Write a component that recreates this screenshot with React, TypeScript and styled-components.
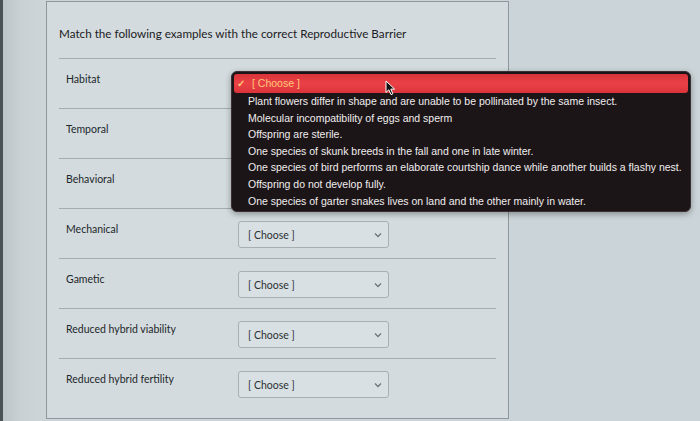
import React from 'react'
import styled, { createGlobalStyle } from 'styled-components'

const barriers = [
  'Habitat',
  'Temporal',
  'Behavioral',
  'Mechanical',
  'Gametic',
  'Reduced hybrid viability',
  'Reduced hybrid fertility',
]

const examples = [
  'Plant flowers differ in shape and are unable to be pollinated by the same insect.',
  'Molecular incompatibility of eggs and sperm',
  'Offspring are sterile.',
  'One species of skunk breeds in the fall and one in late winter.',
  'One species of bird performs an elaborate courtship dance while another builds a flashy nest.',
  'Offspring do not develop fully.',
  'One species of garter snakes lives on land and the other mainly in water.',
]

// rows whose select sits under the open popup menu
const coveredRows = 3

const GlobalStyle = createGlobalStyle`
  html, body {
    margin: 0;
    padding: 0;
    background: #cbd4d8;
  }
  body {
    width: 700px;
    height: 421px;
    overflow: hidden;
  }
`

const Chevron: React.FC = () => (
  <svg width="8" height="6" viewBox="0 0 8 6">
    <path d="M1 1.5 L4 4.5 L7 1.5" fill="none" stroke="#6d767b" strokeWidth="1.3" />
  </svg>
)

const Pointer: React.FC = () => (
  <svg width="11" height="16" viewBox="0 0 11 16">
    <path
      d="M1 1 L1 12.5 L3.8 9.8 L6 14.6 L7.9 13.8 L5.8 9.1 L9.6 9.1 Z"
      fill="#111"
      stroke="#fff"
      strokeWidth="1"
      strokeLinejoin="round"
    />
  </svg>
)

const App: React.FC = () => {
  return (
    <Page>
      <GlobalStyle />
      <Gutter />
      <Card>
        <Title>Match the following examples with the correct Reproductive Barrier</Title>
        <Rows>
          {barriers.map((name, i) => (
            <Row key={name} last={i === barriers.length - 1}>
              <Label>{name}</Label>
              {i < coveredRows ? (
                <Slot />
              ) : (
                <Select>
                  <span>[ Choose ]</span>
                  <Chevron />
                </Select>
              )}
            </Row>
          ))}
        </Rows>
      </Card>
      <Menu>
        <Selected>
          <Check>✓</Check>
          [ Choose ]
          <CursorSpot>
            <Pointer />
          </CursorSpot>
        </Selected>
        {examples.map((text) => (
          <Option key={text}>{text}</Option>
        ))}
      </Menu>
    </Page>
  )
}

const Page = styled.div`
  position: relative;
  display: flex;
  width: 700px;
  height: 421px;
  font-family: Lato, 'Open Sans', sans-serif;
`

const Gutter = styled.div`
  width: 43px;
  border-left: 3px solid #4b5155;
  background: linear-gradient(90deg, #bcc4c8 0%, #c9d1d4 40%, #cdd5d8 100%);
`

const Card = styled.div`
  box-sizing: border-box;
  width: 463px;
  height: 418px;
  margin-top: 1px;
  border: 1px solid #8e979b;
  background: #d3dbde;
  padding: 0 12px;
`

const Title = styled.div`
  height: 56px;
  box-sizing: border-box;
  padding-top: 24px;
  font-size: 11.7px;
  color: #1c2124;
`

const Rows = styled.div`
  display: flex;
  flex-direction: column;
`

const Row = styled.div<{ last?: boolean }>`
  display: grid;
  grid-template-columns: 179px 151px;
  height: ${(p) => (p.last ? 60 : 50)}px;
  border-top: 1px solid #a3acb0;
  box-sizing: border-box;
`

const Label = styled.div`
  padding: 13px 0 0 7px;
  font-size: 10.5px;
  line-height: 14px;
  color: #22272a;
`

const Slot = styled.div`
  height: 27px;
  margin-top: 12px;
`

const Select = styled.div`
  margin-top: 12px;
  height: 27px;
  box-sizing: border-box;
  border: 1px solid #a7afb3;
  border-radius: 3px;
  background: #d8e0e3;
  display: flex;
  align-items: center;
  justify-content: space-between;
  padding: 0 6px 0 9px;
  font-size: 10.5px;
  color: #2b3033;
`

const Menu = styled.div`
  position: absolute;
  left: 231px;
  top: 71px;
  width: 460px;
  height: 141px;
  box-sizing: border-box;
  padding: 2px;
  border-radius: 6px;
  background: #1c1518;
  border: 1px solid #3b2f33;
  box-shadow: 0 2px 6px rgba(0, 0, 0, 0.35);
  font-family: 'Liberation Sans', Arial, sans-serif;
`

const Selected = styled.div`
  position: relative;
  height: 19px;
  border-radius: 3px;
  background: linear-gradient(180deg, #d9343a 0%, #ea4146 50%, #d9343a 100%);
  color: #ffc878;
  font-size: 10.5px;
  line-height: 19px;
  padding-left: 3px;
  display: flex;
`

const Check = styled.span`
  width: 15px;
  font-size: 10px;
  font-weight: bold;
`

const CursorSpot = styled.span`
  position: absolute;
  left: 151px;
  top: 6px;
`

const Option = styled.div`
  height: 16.6px;
  line-height: 16.6px;
  padding-left: 14px;
  font-size: 10.5px;
  color: #f0eeee;
  white-space: nowrap;
`

export default App
